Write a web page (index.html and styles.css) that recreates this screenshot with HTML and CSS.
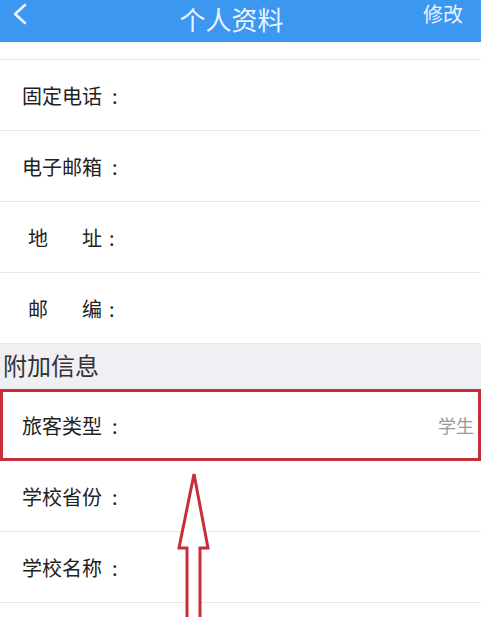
FILE: index.html
```html
<!DOCTYPE html>
<html lang="zh-CN">
<head>
<meta charset="utf-8">
<title>个人资料</title>
<link rel="stylesheet" href="styles.css">
</head>
<body>
<div class="page">
  <header class="topbar">
    <svg class="back" width="16" height="22" viewBox="0 0 16 22"><path d="M13 2 L3 11 L13 20" fill="none" stroke="#eaf3fe" stroke-width="2.6" stroke-linecap="round" stroke-linejoin="round"/></svg>
    <div class="title">个人资料</div>
    <div class="edit">修改</div>
  </header>
  <div class="tail"></div>
  <div class="row"><span class="label">固定电话</span><span class="colon">:</span></div>
  <div class="row"><span class="label">电子邮箱</span><span class="colon">:</span></div>
  <div class="row"><span class="label spread"><span>地</span><span>址</span></span><span class="colon near">:</span></div>
  <div class="row"><span class="label spread"><span>邮</span><span>编</span></span><span class="colon near">:</span></div>
  <div class="section">附加信息</div>
  <div class="row highlight"><span class="label">旅客类型</span><span class="colon">:</span><span class="value">学生</span></div>
  <div class="row"><span class="label">学校省份</span><span class="colon">:</span></div>
  <div class="row"><span class="label">学校名称</span><span class="colon">:</span></div>
  <svg class="arrow" width="40" height="150" viewBox="174 468 40 150"><path d="M194 474 L208 548 L200 548 L200 622 L187 622 L187 548 L179 548 Z" fill="#ffffff" stroke="#c62f3a" stroke-width="3" stroke-linejoin="miter"/></svg>
</div>
</body>
</html>
```
FILE: styles.css
```css
* { box-sizing: border-box; }
html, body { margin: 0; padding: 0; background: #ffffff; }
body {
  font-family: "Noto Sans CJK SC", "Noto Sans", sans-serif;
  color: #222222;
  width: 481px;
  height: 617px;
  overflow: hidden;
}
.page { position: relative; width: 481px; height: 617px; overflow: hidden; }
.topbar {
  height: 42px;
  background: #3c97f1;
  display: flex;
  align-items: flex-start;
  justify-content: space-between;
  padding: 0 18px 0 12px;
  color: #eaf3fe;
}
.back { margin-top: 3px; }
.title { font-size: 26px; line-height: 38px; margin-left: 12px; }
.edit { font-size: 20px; line-height: 28px; }
.tail { height: 18px; border-bottom: 1px solid #e6e6e6; }
.row {
  height: 71px;
  border-bottom: 1px solid #e8e8e8;
  display: flex;
  align-items: center;
  padding: 0 8px 0 22px;
  font-size: 20px;
}
.label { display: inline-flex; width: 80px; }
.spread { justify-content: space-between; padding: 0 0 0 6px; }
.colon { margin-left: 10px; }
.colon.near { margin-left: 7px; }
.section {
  height: 47px;
  background: #efeff4;
  font-size: 24px;
  color: #333333;
  display: flex;
  align-items: center;
  padding-left: 3px;
  padding-bottom: 6px;
}
.highlight { border: 3px solid #c62f3a; padding-left: 19px; padding-right: 4px; height: 72px; margin-top: -2px; }
.value { margin-left: auto; color: #9a9a9a; font-size: 18px; }
.arrow { position: absolute; left: 174px; top: 468px; }
```
